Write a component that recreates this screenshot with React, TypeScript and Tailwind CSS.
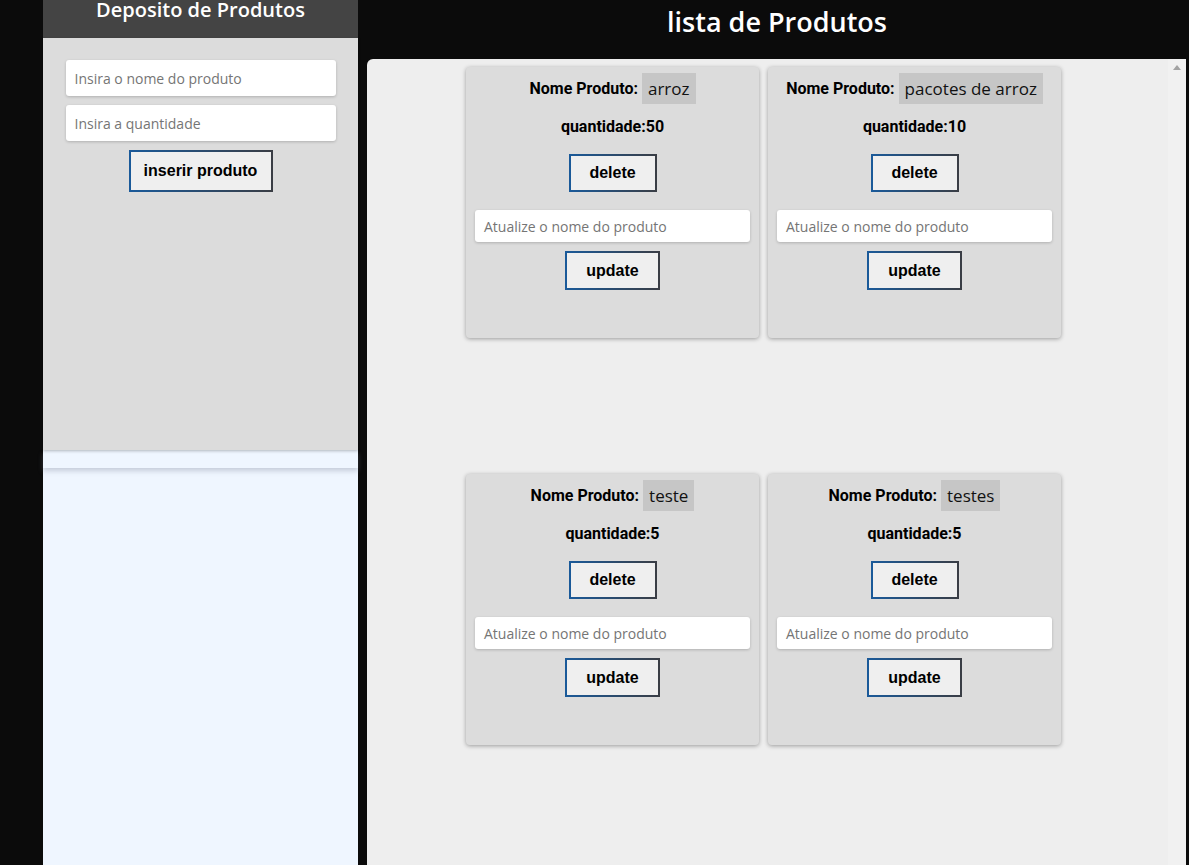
import React from "react";

const products = [
  { name: "arroz", qty: 50 },
  { name: "pacotes de arroz", qty: 10 },
  { name: "teste", qty: 5 },
  { name: "testes", qty: 5 },
];

const fira = { fontFamily: "'Open Sans', 'Noto Sans', sans-serif" } as React.CSSProperties;
const arialN = { fontFamily: "Roboto, 'Liberation Sans', Arial, sans-serif" } as React.CSSProperties;
const arial = { fontFamily: "'Liberation Sans', Arial, sans-serif" } as React.CSSProperties;

function GradBtn({ label, w, h }: { label: string; w: number; h: number }) {
  return (
    <div
      className="p-[2px] bg-[linear-gradient(to_right,#1a5a9a,#3a3d44)]"
      style={{ width: w, height: h }}
    >
      <div
        className="w-full h-full bg-[#efefef] flex items-center justify-center text-[16px] font-bold text-black whitespace-nowrap"
        style={arial}
      >
        {label}
      </div>
    </div>
  );
}

function Card({ name, qty }: { name: string; qty: number }) {
  return (
    <div className="w-[293px] h-[271px] bg-[#dcdcdc] rounded-[4px] shadow-[0_1px_4px_rgba(0,0,0,0.35)] flex flex-col items-center px-[9px] pt-[6px]">
      <div className="flex items-center h-[31px] whitespace-nowrap">
        <span className="text-[16px] font-bold text-black mr-[4px]" style={arialN}>
          Nome Produto:
        </span>
        <span className="h-[31px] bg-[#c6c6c6] px-[6px] flex items-center text-[17px] text-[#111]" style={fira}>
          {name}
        </span>
      </div>
      <div className="mt-[14px] h-[18px] leading-[18px] text-[16px] font-bold text-black whitespace-nowrap" style={arialN}>
        quantidade:{qty}
      </div>
      <div className="mt-[18px]">
        <GradBtn label="delete" w={88} h={38} />
      </div>
      <div
        className="mt-[18px] w-full h-[32px] bg-white rounded-[3px] shadow-[0_1px_3px_rgba(0,0,0,0.2)] flex items-center px-[9px] text-[14px] text-[#757575] whitespace-nowrap"
        style={fira}
      >
        Atualize o nome do produto
      </div>
      <div className="mt-[9px]">
        <GradBtn label="update" w={95} h={39} />
      </div>
    </div>
  );
}

export default function App() {
  return (
    <div className="w-full h-[865px] bg-[#0b0b0b] flex overflow-hidden">
      <div className="w-[43px] shrink-0" />
      <div className="w-[315px] shrink-0 flex flex-col bg-[#eff6ff]">
        <div className="h-[38px] bg-[#444444] flex justify-center">
          <span className="text-white text-[20px] font-semibold leading-[20px] whitespace-nowrap" style={fira}>
            Deposito de Produtos
          </span>
        </div>
        <div className="h-[412px] bg-[#dcdcdc] shadow-[0_1px_3px_rgba(0,0,0,0.25)] flex flex-col items-center pt-[22px] relative z-10">
          <div
            className="w-[270px] h-[36px] bg-white rounded-[3px] shadow-[0_1px_3px_rgba(0,0,0,0.2)] flex items-center px-[9px] text-[14px] text-[#757575]"
            style={fira}
          >
            Insira o nome do produto
          </div>
          <div
            className="mt-[9px] w-[270px] h-[36px] bg-white rounded-[3px] shadow-[0_1px_3px_rgba(0,0,0,0.2)] flex items-center px-[9px] text-[14px] text-[#757575]"
            style={fira}
          >
            Insira a quantidade
          </div>
          <div className="mt-[9px]">
            <GradBtn label="inserir produto" w={144} h={42} />
          </div>
        </div>
        <div className="mt-[1px] h-[17px] bg-[#eff6ff] shadow-[0_3px_5px_rgba(120,130,150,0.35)] relative z-[5]" />
        <div className="flex-1 bg-[#eff6ff]" />
      </div>
      <div className="flex-1 flex flex-col min-w-0">
        <div className="h-[59px] shrink-0 flex justify-center pl-[7px]">
          <span className="text-white text-[27px] font-semibold leading-[40px] mt-[2px] whitespace-nowrap" style={fira}>
            lista de Produtos
          </span>
        </div>
        <div className="flex-1 ml-[9px] mr-[3px] bg-[#eeeeee] rounded-tl-[6px] flex">
          <div className="flex-1 pl-[99px] pt-[8px]">
            <div className="grid grid-cols-[293px_293px] gap-x-[9px] gap-y-[136px]">
              {products.map((p) => (
                <Card key={p.name} name={p.name} qty={p.qty} />
              ))}
            </div>
          </div>
          <div className="w-[18px] bg-[#f1f1f1] flex justify-center pt-[6px]">
            <svg width="8" height="5" viewBox="0 0 8 5">
              <polygon points="4,0 8,5 0,5" fill="#a3a3a3" />
            </svg>
          </div>
        </div>
      </div>
    </div>
  );
}
